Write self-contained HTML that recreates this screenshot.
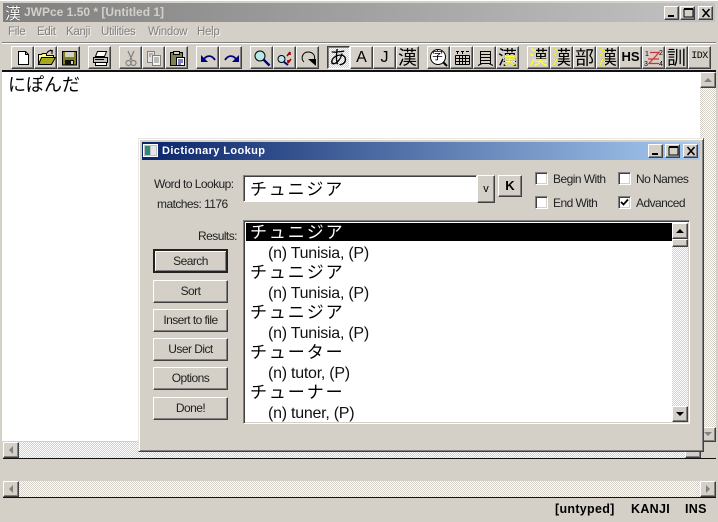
<!DOCTYPE html>
<html><head><meta charset="utf-8"><style>
html,body{margin:0;padding:0;width:718px;height:522px;overflow:hidden;background:#d4d0c8}
*{box-sizing:border-box}
body{font-family:"Liberation Sans","Noto Sans CJK JP",sans-serif;font-size:12px;color:#000;position:relative}
.a{position:absolute;white-space:nowrap}
.up{background:#d4d0c8;border:1px solid;border-color:#fff #404040 #404040 #fff;box-shadow:inset -1px -1px 0 #808080}
.tb{position:absolute;top:46px;width:23px;height:23px;background:#d4d0c8;border:1px solid;border-color:#fff #404040 #404040 #fff;box-shadow:inset -1px -1px 0 #808080;font-family:"Noto Sans CJK JP",sans-serif;font-size:19px;line-height:20px;text-align:center;overflow:hidden}
.tb svg{position:absolute;left:1px;top:1px}
.tb .y,.tb .k{position:absolute;left:0;top:0;width:21px;height:21px}
.tb .y{color:#ffff30}
.chk{background:repeating-conic-gradient(#fff 0 25%,#d4d0c8 0 50%) 0 0/2px 2px}
.btn{position:absolute;left:153px;width:75px;height:23px;background:#d4d0c8;border:1px solid;border-color:#fff #404040 #404040 #fff;box-shadow:inset -1px -1px 0 #808080;text-align:center;line-height:20px;font-size:12px;letter-spacing:-.55px;color:#222}
.cb{position:absolute;width:13px;height:13px;background:#fff;border:1px solid;border-color:#808080 #fff #fff #808080;box-shadow:inset 1px 1px 0 #404040,inset -1px -1px 0 #d4d0c8}
.jp{position:absolute;left:250px;font-family:"Noto Sans CJK JP",sans-serif;font-size:17px;line-height:20px;white-space:nowrap}
.en{position:absolute;left:268px;font-size:16px;line-height:20px;letter-spacing:-.25px;white-space:nowrap;color:#111}
.w{position:absolute;width:15px;height:14px;background:#d4d0c8;border:1px solid;border-color:#fff #404040 #404040 #fff;box-shadow:inset -1px -1px 0 #808080}
.w svg{position:absolute;left:1px;top:0}
.t{color:#222;font-size:12px;letter-spacing:-.55px}
.m{position:absolute;top:26px;font-size:11.5px;letter-spacing:-.3px;color:#808080;text-shadow:1px 1px 0 #f4f2ee}
.s{position:absolute;top:502px;font-weight:bold;font-size:12.500px;letter-spacing:.3px;line-height:15px;white-space:nowrap}
</style></head><body>

<!-- outer frame -->
<div class="a" style="left:0;top:0;width:718px;height:3px;background:#d4d0c8;border-top:1px solid #fff"></div>
<div class="a" style="left:3px;top:3px;width:712px;height:19px;background:linear-gradient(90deg,#808080,#c2c2c2)"></div>
<div class="a" style="left:5px;top:3px;width:17px;height:19px;font-family:'Noto Sans CJK JP',sans-serif;font-size:16px;line-height:19px;color:#fff;text-shadow:0 0 1px #000">漢</div>
<div class="a" style="left:24px;top:5px;font-weight:bold;font-size:12px;color:#d4d0c8;line-height:15px">JWPce 1.50 * [Untitled 1]</div>
<div class="w" style="left:664px;top:6px"><svg width="13" height="12"><rect x="2" y="8" width="6" height="2"/></svg></div>
<div class="w" style="left:680px;top:6px"><svg width="13" height="12"><path d="M2 2.500h9V10H2zM2 1.500h9" fill="none" stroke="#000"/></svg></div>
<div class="w" style="left:698px;top:6px"><svg width="13" height="12"><path d="M2.500 2l7 8M9.500 2l-7 8" stroke="#000" stroke-width="1.600" fill="none"/></svg></div>

<!-- menu -->
<div class="m" style="left:8px">File</div>
<div class="m" style="left:37px">Edit</div>
<div class="m" style="left:66px">Kanji</div>
<div class="m" style="left:101px">Utilities</div>
<div class="m" style="left:148px">Window</div>
<div class="m" style="left:197px">Help</div>
<div class="a" style="left:2px;top:42px;width:714px;height:2px;border-top:1px solid #808080;border-bottom:1px solid #fff"></div>

<!-- toolbar -->
<div class="tb" style="left:11px"><svg width="20" height="20"><path d="M5.500 3.500h7l3 3v10h-10z" fill="#fff" stroke="#000"/><path d="M12.500 3.500v3h3" fill="none" stroke="#000"/></svg></div>
<div class="tb" style="left:34px"><svg width="20" height="20"><path d="M2.500 16.500v-10h3l1-1h4v2h7v2" fill="#ffff80" stroke="#000"/><path d="M2.500 16.500l3-7h14l-4 7z" fill="#a8a820" stroke="#000"/><path d="M11 5c1-2 3-3 5-2M16 3v3M14 2l3 1" fill="none" stroke="#000"/></svg></div>
<div class="tb" style="left:57px"><svg width="20" height="20"><rect x="3.500" y="3.500" width="14" height="13.500" fill="#808020" stroke="#000"/><rect x="6" y="4" width="9" height="5" fill="#d4d0c8"/><rect x="6" y="12" width="9" height="5" fill="#111"/><rect x="12" y="13" width="2" height="3" fill="#d4d0c8"/></svg></div>
<div class="tb" style="left:88px"><svg width="20" height="20"><path d="M7.500 3.500h9l-2 5h-9z" fill="#fff" stroke="#000"/><path d="M3.500 9.500h14v5h-14z" fill="#c0c0c0" stroke="#000"/><path d="M5.500 14.500h11v3h-11z" fill="#fff" stroke="#000"/><path d="M5 11.500h9" stroke="#000"/></svg></div>
<div class="tb" style="left:119px"><svg width="20" height="20"><path d="M7 3l4 9M13 3l-4 9" stroke="#808080" stroke-width="1.200" fill="none"/><circle cx="7.500" cy="15" r="2.500" fill="none" stroke="#808080" stroke-width="1.200"/><circle cx="12.500" cy="15" r="2.500" fill="none" stroke="#808080" stroke-width="1.200"/></svg></div>
<div class="tb" style="left:142px"><svg width="20" height="20"><path d="M3.500 3.500h7v11h-7z" fill="#e4e2dc" stroke="#808080"/><path d="M8.500 7.500h8v10h-8z" fill="#f4f4f0" stroke="#808080"/><path d="M10 10h5M10 12h5M10 14h5M5 6h4M5 8h2" stroke="#808080"/></svg></div>
<div class="tb" style="left:165px"><svg width="20" height="20"><path d="M3.500 4.500h12v13h-12z" fill="#808050" stroke="#000"/><path d="M6.500 3.500h6v3h-6z" fill="#d4d0c8" stroke="#000"/><path d="M9.500 9.500h8v8h-8z" fill="#fff" stroke="#000"/><path d="M11 12h5M11 14h5M11 16h3" stroke="#000080"/></svg></div>
<div class="tb" style="left:196px"><svg width="20" height="20"><path d="M3 7v7h7z" fill="#000080"/><path d="M6 11c3-4 8-4 11 1" fill="none" stroke="#000080" stroke-width="1.800"/></svg></div>
<div class="tb" style="left:219px"><svg width="20" height="20"><path d="M18 7v7h-7z" fill="#000080"/><path d="M15 11c-3-4-8-4-11 1" fill="none" stroke="#000080" stroke-width="1.800"/></svg></div>
<div class="tb" style="left:250px"><svg width="20" height="20"><circle cx="8" cy="8" r="5" fill="#b8e8e8" stroke="#000"/><path d="M11.500 11.500l6 6" stroke="#000080" stroke-width="2.400"/></svg></div>
<div class="tb" style="left:273px"><svg width="20" height="20"><circle cx="6.500" cy="11" r="3.500" fill="#b8e8e8" stroke="#000"/><path d="M9 14l4 3" stroke="#000080" stroke-width="2"/><path d="M12 8l3-4M15 4v3M16 11l-3 4M13 15v-3" stroke="#a00000" stroke-width="1.600" fill="none"/></svg></div>
<div class="tb" style="left:296px"><svg width="20" height="20"><path d="M6 14C2 10 5 4 10 4s8 4 6 8" fill="none" stroke="#000"/><path d="M10 11h8v7z" fill="#000"/></svg></div>

<div class="tb chk" style="left:327px;border-color:#404040 #fff #fff #404040;box-shadow:inset 1px 1px 0 #808080">あ</div>
<div class="tb" style="left:350px;font-family:'Liberation Sans';font-size:16px;line-height:21px">A</div>
<div class="tb" style="left:373px;font-family:'Liberation Sans';font-size:16px;line-height:21px">J</div>
<div class="tb" style="left:396px">漢</div>

<div class="tb" style="left:427px;font-size:11px;line-height:19px"><svg width="20" height="20"><circle cx="9" cy="9" r="7.500" fill="#fff" stroke="#000"/><path d="M14 14l4 4" stroke="#000" stroke-width="2"/></svg><span style="position:relative;left:-1px;top:-1px">字</span></div>
<div class="tb" style="left:450px"><svg width="20" height="20"><path d="M3.500 7.500h14M3.500 10.500h14M3.500 13.500h14M3.500 16.500h14M3.500 7.500v9M7.500 7.500v9M10.500 7.500v9M13.500 7.500v9M17.500 7.500v9M4 3.500h3M9 3.500h3M14 3.500h3M5.500 3v3M10.500 3v3" stroke="#000" fill="none"/></svg></div>
<div class="tb" style="left:473px"><svg width="20" height="20"><path d="M5.500 3.500h10v12h-10zM5.500 6.500h10M5.500 9.500h10M5.500 12.500h10M3 17.500l4-2M18 17.500l-4-2" stroke="#000" fill="none"/></svg></div>
<div class="tb" style="left:496px"><span class="k">漢</span><span class="y" style="clip-path:inset(8px 3px 3px 8px)">漢</span></div>

<div class="tb" style="left:527px"><span class="y">漢</span><span class="k" style="clip-path:inset(0 0 9px 8px)">漢</span></div>
<div class="tb" style="left:550px"><span class="k">漢</span><span class="y" style="clip-path:inset(0 14px 0 0)">漢</span></div>
<div class="tb" style="left:573px">部</div>
<div class="tb" style="left:596px"><span class="k">漢</span><span class="y" style="clip-path:inset(0 13px 0 0)">漢</span></div>
<div class="tb" style="left:619px;font-family:'Liberation Sans';font-weight:bold;font-size:13px;line-height:20px">HS</div>
<div class="tb" style="left:642px"><svg width="20" height="20"><path d="M6 4.500h9L5 15.500h10M4 11h11" stroke="#d03030" stroke-width="1.200" fill="none"/><g font-family="Liberation Sans" font-size="7" fill="#000"><text x="1" y="8">1</text><text x="15" y="7">2</text><text x="0" y="18">3</text><text x="15" y="18">4</text></g></svg></div>
<div class="tb" style="left:665px">訓</div>
<div class="tb" style="left:688px;font-family:'Liberation Mono';font-size:10px;line-height:20px;letter-spacing:-.5px">IDX</div>

<div class="a" style="left:2px;top:70px;width:714px;height:2px;background:#111"></div>

<!-- client -->
<div class="a" style="left:2px;top:72px;width:698px;height:369px;background:#fff"></div>
<div class="a" style="left:8px;top:73px;font-family:'Noto Sans CJK JP',sans-serif;font-size:18px;line-height:22px">にぽんだ</div>
<div class="a chk" style="left:700px;top:72px;width:16px;height:369px"></div>
<div class="a up" style="left:700px;top:72px;width:16px;height:16px"><svg width="14" height="14" style="display:block"><path d="M3 9h8L7 5z" fill="#808080"/></svg></div>
<div class="a up" style="left:700px;top:427px;width:16px;height:15px"><svg width="14" height="13" style="display:block"><path d="M3 4h8L7 8z" fill="#808080"/></svg></div>
<div class="a chk" style="left:3px;top:442px;width:697px;height:16px"></div>
<div class="a up" style="left:3px;top:442px;width:16px;height:16px"><svg width="14" height="14" style="display:block"><path d="M9 3v8L5 7z" fill="#808080"/></svg></div>
<div class="a up" style="left:685px;top:442px;width:16px;height:16px"></div>
<div class="a" style="left:3px;top:458px;width:713px;height:1px;background:#111"></div>

<div class="a chk" style="left:3px;top:481px;width:713px;height:16px"></div>
<div class="a up" style="left:3px;top:481px;width:16px;height:16px"><svg width="14" height="14" style="display:block"><path d="M9 3v8L5 7z" fill="#808080"/></svg></div>
<div class="a up" style="left:700px;top:481px;width:16px;height:16px"><svg width="14" height="14" style="display:block"><path d="M5 3v8l4-4z" fill="#808080"/></svg></div>
<div class="a" style="left:3px;top:497px;width:713px;height:1px;background:#111"></div>

<!-- status -->
<div class="s" style="left:555px">[untyped]</div>
<div class="s" style="left:631px">KANJI</div>
<div class="s" style="left:685px">INS</div>

<!-- dialog -->
<div class="a" style="left:138px;top:138px;width:566px;height:314px;background:#d4d0c8;border:1px solid;border-color:#e8e6e0 #404040 #404040 #e8e6e0;box-shadow:inset 1px 1px 0 #fff,inset -1px -1px 0 #808080"></div>
<div class="a" style="left:142px;top:142px;width:558px;height:18px;background:linear-gradient(90deg,#0a246a,#a6caf0)"></div>
<svg class="a" style="left:143px;top:144px" width="16" height="14"><rect x="0.500" y="0.500" width="14" height="12" fill="#c0c0c0" stroke="#fff"/><rect x="2" y="2" width="5" height="9" fill="#308878"/><rect x="8" y="2" width="5" height="9" fill="#e4e4ec"/></svg>
<div class="a" style="left:162px;top:143px;font-weight:bold;font-size:11px;letter-spacing:.4px;line-height:16px;color:#fff">Dictionary Lookup</div>
<div class="w" style="left:648px;top:144px"><svg width="13" height="12"><rect x="2" y="8" width="6" height="2"/></svg></div>
<div class="w" style="left:665px;top:144px"><svg width="13" height="12"><path d="M2 2.500h9V10H2zM2 1.500h9" fill="none" stroke="#000"/></svg></div>
<div class="w" style="left:683px;top:144px"><svg width="13" height="12"><path d="M2.500 2l7 8M9.500 2l-7 8" stroke="#000" stroke-width="1.600" fill="none"/></svg></div>

<div class="a t" style="left:154px;top:177px">Word to Lookup:</div>
<div class="a t" style="left:157px;top:197px">matches: 1176</div>
<div class="a t" style="left:198px;top:229px">Results:</div>

<div class="a" style="left:243px;top:175px;width:234px;height:27px;background:#fff;border:1px solid;border-color:#808080 #fff #fff #808080;box-shadow:inset 1px 1px 0 #404040"></div>
<div class="jp" style="top:178px;letter-spacing:1.800px">チュニジア</div>
<div class="a up" style="left:477px;top:175px;width:18px;height:28px;text-align:center;font-size:11px;line-height:26px">v</div>
<div class="a up" style="left:498px;top:175px;width:24px;height:22px;text-align:center;font-weight:bold;font-size:13px;line-height:19px">K</div>

<div class="cb" style="left:535px;top:172px"></div>
<div class="a t" style="left:553px;top:172px">Begin With</div>
<div class="cb" style="left:618px;top:172px"></div>
<div class="a t" style="left:636px;top:172px">No Names</div>
<div class="cb" style="left:535px;top:196px"></div>
<div class="a t" style="left:553px;top:196px">End With</div>
<div class="cb" style="left:618px;top:196px"><svg width="11" height="11" style="display:block"><path d="M2 5l2.500 2.500L9 2.500" fill="none" stroke="#000" stroke-width="1.800"/></svg></div>
<div class="a t" style="left:636px;top:196px">Advanced</div>

<div class="btn" style="top:249px;height:24px;border:2px solid #222;box-shadow:inset 1px 1px 0 #fff,inset -1px -1px 0 #808080">Search</div>
<div class="btn" style="top:280px">Sort</div>
<div class="btn" style="top:309px">Insert to file</div>
<div class="btn" style="top:338px">User Dict</div>
<div class="btn" style="top:367px">Options</div>
<div class="btn" style="top:397px">Done!</div>

<!-- list -->
<div class="a" style="left:243px;top:220px;width:447px;height:204px;background:#fff;border:1px solid;border-color:#808080 #fff #fff #808080;box-shadow:inset 1px 1px 0 #404040,inset -1px -1px 0 #d4d0c8"></div>
<div class="a" style="left:246px;top:223px;width:426px;height:18px;background:#000"></div>
<div class="jp" style="top:221px;color:#fff;letter-spacing:1.900px">チュニジア</div>
<div class="en" style="top:244px">(n) Tunisia, (P)</div>
<div class="jp" style="top:261px;letter-spacing:1.900px">チュニジア</div>
<div class="en" style="top:284px">(n) Tunisia, (P)</div>
<div class="jp" style="top:301px;letter-spacing:1.900px">チュニジア</div>
<div class="en" style="top:324px">(n) Tunisia, (P)</div>
<div class="jp" style="top:341px;letter-spacing:1.900px">チューター</div>
<div class="en" style="top:364px">(n) tutor, (P)</div>
<div class="jp" style="top:381px;letter-spacing:1.900px">チューナー</div>
<div class="en" style="top:404px">(n) tuner, (P)</div>

<div class="a chk" style="left:672px;top:223px;width:16px;height:199px"></div>
<div class="a up" style="left:672px;top:223px;width:16px;height:16px"><svg width="14" height="14" style="display:block"><path d="M3 9h8L7 5z"/></svg></div>
<div class="a up" style="left:672px;top:239px;width:16px;height:8px"></div>
<div class="a up" style="left:672px;top:406px;width:16px;height:16px"><svg width="14" height="14" style="display:block"><path d="M3 5h8L7 9z"/></svg></div>
</body></html>
